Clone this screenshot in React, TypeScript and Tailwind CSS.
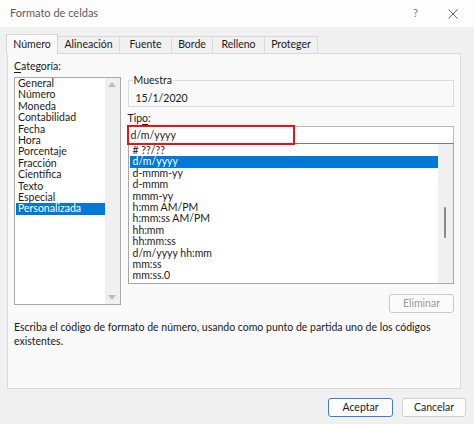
const categorias = [
  "General",
  "Número",
  "Moneda",
  "Contabilidad",
  "Fecha",
  "Hora",
  "Porcentaje",
  "Fracción",
  "Científica",
  "Texto",
  "Especial",
  "Personalizada",
];

const tipos = [
  "# ??/??",
  "d/m/yyyy",
  "d-mmm-yy",
  "d-mmm",
  "mmm-yy",
  "h:mm AM/PM",
  "h:mm:ss AM/PM",
  "hh:mm",
  "hh:mm:ss",
  "d/m/yyyy hh:mm",
  "mm:ss",
  "mm:ss.0",
];

const tabs = [
  { label: "Número", w: 52 },
  { label: "Alineación", w: 62 },
  { label: "Fuente", w: 52 },
  { label: "Borde", w: 41 },
  { label: "Relleno", w: 52 },
  { label: "Proteger", w: 53 },
];

export default function App() {
  return (
    <div className="relative w-[474px] h-[424px] overflow-hidden bg-[#f0f0f0] text-[10.5px] text-[#1a1a1a] font-['Lato',sans-serif]">
      {/* barra de título */}
      <div className="flex h-[27px] items-center bg-[#fdfdfd] pl-[10px]">
        <span className="text-[11px] text-[#5c5c5c]">Formato de celdas</span>
        <span className="ml-auto mr-[30px] text-[11px] text-[#777]">?</span>
        <svg width="10" height="10" viewBox="0 0 10 10" className="mr-[16px]">
          <path d="M0.5 0.5 L9.5 9.5 M9.5 0.5 L0.5 9.5" stroke="#666" strokeWidth="1" />
        </svg>
      </div>

      {/* pestañas */}
      <div className="flex h-[26px] items-end pl-[6px]">
        {tabs.map((t, i) =>
          i === 0 ? (
            <div
              key={t.label}
              className="relative z-10 -mb-px flex h-[20px] w-[52px] items-center justify-center border border-b-0 border-[#d4d4d4] bg-[#f9f9f9]"
            >
              {t.label}
            </div>
          ) : (
            <div
              key={t.label}
              className="flex h-[17px] items-center justify-center border border-l-0 border-b-0 border-[#d9d9d9] bg-[#f0f0f0]"
              style={{ width: t.w }}
            >
              {t.label}
            </div>
          ),
        )}
      </div>

      {/* panel */}
      <div className="mx-[7px] flex h-[336px] w-[454px] flex-col border border-[#d9d9d9] bg-[#f9f9f9] px-[6px]">
        <div className="flex gap-[7px] pt-[5px]">
          {/* categoría */}
          <div className="w-[108px]">
            <div className="h-[14px] leading-[14px]">
              <span className="underline underline-offset-2">C</span>ategoría:
            </div>
            <div className="mt-[4px] flex h-[228px] border border-[#a8a8a8] bg-white">
              <ul className="flex-1 pl-px">
                {categorias.map((c) => (
                  <li
                    key={c}
                    className={
                      c === "Personalizada"
                        ? "h-[11.4px] bg-[#0078d7] pl-[2px] leading-[11.4px] text-white"
                        : "h-[11.4px] pl-[2px] leading-[11.4px]"
                    }
                  >
                    {c}
                  </li>
                ))}
              </ul>
              <div className="flex w-[15px] flex-col items-center justify-between bg-[#f0f0f0] py-[4px]">
                <svg width="8" height="5" viewBox="0 0 8 5">
                  <path d="M0 5 L4 0 L8 5 Z" fill="#bdbdbd" />
                </svg>
                <svg width="8" height="5" viewBox="0 0 8 5">
                  <path d="M0 0 L4 5 L8 0 Z" fill="#bdbdbd" />
                </svg>
              </div>
            </div>
          </div>

          {/* tipo */}
          <div className="flex w-[331px] flex-col">
            <div className="relative mt-[21px] h-[27px] border border-[#dcdcdc]">
              <span className="absolute -top-[8px] left-[4px] bg-[#f9f9f9] px-px leading-[14px]">Muestra</span>
              <div className="pl-[7px] pt-[10px] leading-[14px]">15/1/2020</div>
            </div>
            <div className="mt-[4px] h-[14px] leading-[14px]">
              Tip<span className="underline underline-offset-2">o</span>:
            </div>
            <div className="relative mt-[1px] h-[18px] border border-[#b9b9b9] border-b-[#7a7a7a] bg-white">
              <div className="absolute -left-[2px] -top-[2px] h-[20px] w-[168px] border-2 border-[#e3141b]" />
              <div className="pl-[2px] leading-[16px]">d/m/yyyy</div>
            </div>
            <div className="flex h-[140px] overflow-hidden border border-t-0 border-[#a8a8a8] bg-white">
              <ul className="flex-1 pl-px pt-[1px]">
                {tipos.map((t) => (
                  <li
                    key={t}
                    className={
                      t === "d/m/yyyy"
                        ? "h-[11.4px] bg-[#0078d7] pl-[3px] leading-[11.4px] text-white"
                        : "h-[11.4px] pl-[3px] leading-[11.4px]"
                    }
                  >
                    {t}
                  </li>
                ))}
              </ul>
              <div className="relative w-[15px] bg-[#f0f0f0]">
                <div className="absolute left-[6px] top-[63px] h-[31px] w-[2px] rounded bg-[#8a8a8a]" />
              </div>
            </div>
            <div className="mt-[10px] flex justify-end">
              <button className="h-[19px] w-[65px] rounded-[3px] border border-[#c9c9c9] bg-[#fbfbfb] text-[#9a9a9a]">
                Eliminar
              </button>
            </div>
          </div>
        </div>

        <p className="mt-[7px] w-[430px] leading-[14px]">
          Escriba el código de formato de número, usando como punto de partida uno de los códigos existentes.
        </p>
      </div>

      {/* botones */}
      <div className="flex justify-end gap-[9px] pr-[8px] pt-[9px]">
        <button className="h-[19px] w-[65px] rounded-[3px] border border-[#3b7fc4] bg-[#fdfdfd]">Aceptar</button>
        <button className="h-[19px] w-[64px] rounded-[3px] border border-[#cfcfcf] bg-[#fdfdfd]">Cancelar</button>
      </div>
    </div>
  );
}
